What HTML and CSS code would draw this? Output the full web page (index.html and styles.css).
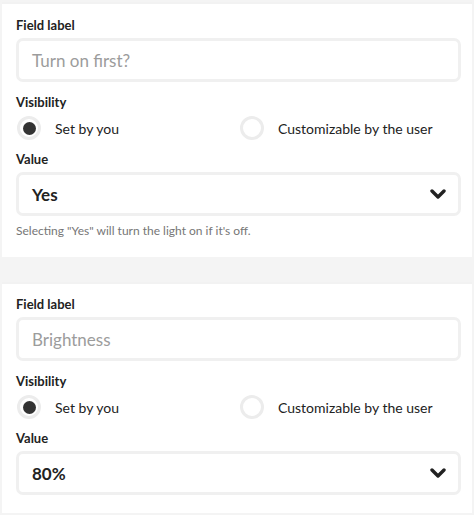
FILE: index.html
```html
<!DOCTYPE html>
<html lang="en">
<head>
<meta charset="utf-8">
<title>Fields</title>
<link rel="stylesheet" href="styles.css">
</head>
<body>
<div class="page">
  <section class="card">
    <div class="label">Field label</div>
    <div class="box input"><span class="placeholder">Turn on first?</span></div>
    <div class="label gap-top">Visibility</div>
    <div class="radios">
      <div class="option"><span class="radio checked"></span><span>Set by you</span></div>
      <div class="option"><span class="radio"></span><span>Customizable by the user</span></div>
    </div>
    <div class="label value-label">Value</div>
    <div class="box select">
      <span class="value">Yes</span>
      <svg class="chevron" width="16" height="11" viewBox="0 0 16 11"><path d="M2 2 L8 8 L14 2" fill="none" stroke="#222" stroke-width="3.4" stroke-linecap="round" stroke-linejoin="round"/></svg>
    </div>
    <div class="help">Selecting "Yes" will turn the light on if it's off.</div>
  </section>
  <section class="card second">
    <div class="label">Field label</div>
    <div class="box input"><span class="placeholder">Brightness</span></div>
    <div class="label gap-top">Visibility</div>
    <div class="radios">
      <div class="option"><span class="radio checked"></span><span>Set by you</span></div>
      <div class="option"><span class="radio"></span><span>Customizable by the user</span></div>
    </div>
    <div class="label value-label">Value</div>
    <div class="box select">
      <span class="value">80%</span>
      <svg class="chevron" width="16" height="11" viewBox="0 0 16 11"><path d="M2 2 L8 8 L14 2" fill="none" stroke="#222" stroke-width="3.4" stroke-linecap="round" stroke-linejoin="round"/></svg>
    </div>
  </section>
</div>
</body>
</html>
```

FILE: styles.css
```css
* { box-sizing: border-box; }
html, body {
  margin: 0;
  padding: 0;
  background: #f4f4f4;
  font-family: Lato, "Open Sans", Arial, sans-serif;
  color: #222;
}
.page {
  width: 474px;
  padding: 2px 2px 0 2px;
  display: flex;
  flex-direction: column;
  gap: 25px;
}
.card {
  width: 470px;
  background: #fff;
  border-top: 2px solid #f2f2f2;
  padding: 13px 11px 18px 14px;
  display: flex;
  flex-direction: column;
}
.card.second { padding-top: 12px; }
.label {
  font-size: 13px;
  font-weight: 700;
  line-height: 16px;
  color: #222;
  margin-bottom: 5px;
}
.gap-top { margin-top: 12px; }
.value-label { margin-top: 11px; }
.box {
  height: 44px;
  border: 3px solid #f0f0f0;
  border-radius: 7px;
  padding: 0 12px 0 13px;
  display: flex;
  align-items: center;
  justify-content: space-between;
}
.placeholder {
  font-size: 17px;
  color: #9c9c9c;
}
.value {
  font-size: 17px;
  font-weight: 700;
  color: #222;
}
.radios {
  display: grid;
  grid-template-columns: 223px 1fr;
  height: 24px;
  margin-top: 1px;
}
.option {
  display: flex;
  align-items: center;
  gap: 14px;
  font-size: 14px;
  color: #222;
}
.radio {
  width: 24px;
  height: 24px;
  border-radius: 50%;
  border: 3px solid #ececec;
  background: #fff;
  margin-left: 1px;
  display: flex;
  align-items: center;
  justify-content: center;
  flex: none;
}
.radio.checked::after {
  content: "";
  width: 13px;
  height: 13px;
  border-radius: 50%;
  background: #333;
}
.help {
  margin-top: 7px;
  font-size: 12px;
  line-height: 16px;
  color: #767676;
}
.chevron { display: block; }
```
